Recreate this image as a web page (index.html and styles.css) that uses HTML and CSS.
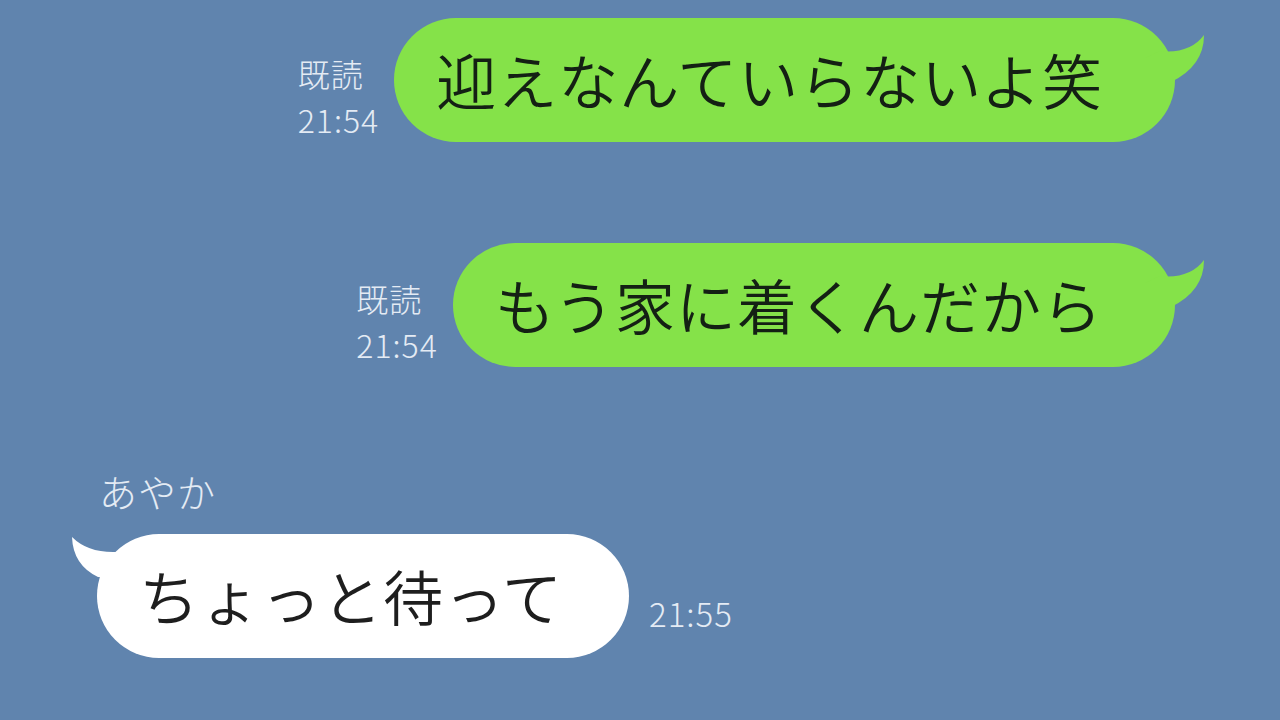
FILE: index.html
```html
<!DOCTYPE html>
<html lang="ja">
<head>
<meta charset="utf-8">
<title>Chat</title>
<link rel="stylesheet" href="styles.css">
</head>
<body>
<div class="chat">
  <div class="row-out row-first">
    <div class="meta"><span>既読</span><span>21:54</span></div>
    <div class="bubble bubble-out">迎えなんていらないよ笑
      <svg class="tail-out" width="75" height="80" viewBox="0 0 75 80"><path d="M10,40 L25,33 Q55,36 69,17 Q69,48 36,64 L10,64 Z" fill="#85e249"/></svg>
    </div>
  </div>
  <div class="row-out row-second">
    <div class="meta"><span>既読</span><span>21:54</span></div>
    <div class="bubble bubble-out">もう家に着くんだから
      <svg class="tail-out" width="75" height="80" viewBox="0 0 75 80"><path d="M10,40 L25,33 Q55,36 69,17 Q69,48 36,64 L10,64 Z" fill="#85e249"/></svg>
    </div>
  </div>
  <div class="incoming">
    <div class="name">あやか</div>
    <div class="row-in">
      <div class="bubble bubble-in">ちょっと待って
        <svg class="tail-in" width="60" height="70" viewBox="0 0 60 70"><path d="M7,8 Q22,23 48,23 L58,23 L58,50 L33,48 Q8,36 7,8 Z" fill="#ffffff"/></svg>
      </div>
      <div class="time-in">21:55</div>
    </div>
  </div>
</div>
</body>
</html>
```

FILE: styles.css
```css
html, body {
  margin: 0;
  padding: 0;
}

.chat {
  width: 1280px;
  height: 720px;
  background: #6084ae;
  font-family: "Noto Sans CJK JP", "Noto Sans", sans-serif;
  display: flex;
  flex-direction: column;
  overflow: hidden;
}

.row-out {
  display: flex;
  justify-content: flex-end;
  align-items: flex-end;
  gap: 15px;
  padding-right: 105px;
}

.row-first {
  margin-top: 18px;
}

.row-second {
  margin-top: 101px;
}

.meta {
  display: flex;
  flex-direction: column;
  align-items: flex-start;
  font-size: 32px;
  font-weight: 300;
  line-height: 46px;
  letter-spacing: 1px;
  color: #e4ebf4;
  margin-bottom: 0;
}

.bubble {
  position: relative;
  box-sizing: border-box;
  height: 124px;
  border-radius: 62px;
  display: flex;
  align-items: center;
  padding: 0 72px 4px 42px;
  font-size: 60px;
  font-weight: 350;
  letter-spacing: 1px;
  white-space: nowrap;
}

.bubble-out {
  background: #85e249;
  color: #142014;
}

.bubble-in {
  background: #ffffff;
  color: #1e1e1e;
  padding-right: 66px;
}

.tail-out {
  position: absolute;
  left: calc(100% - 40px);
  top: 0;
}

.tail-in {
  position: absolute;
  left: -32px;
  top: -5px;
}

.incoming {
  margin-top: 101px;
  padding-left: 97px;
  display: flex;
  flex-direction: column;
}

.name {
  font-size: 38px;
  font-weight: 300;
  line-height: 46px;
  letter-spacing: 1px;
  color: #e4ebf4;
  padding-left: 2px;
}

.row-in {
  display: flex;
  align-items: flex-end;
  gap: 20px;
  margin-top: 20px;
}

.time-in {
  font-size: 33px;
  font-weight: 300;
  line-height: 48px;
  letter-spacing: 1px;
  color: #e4ebf4;
  margin-bottom: 21px;
}
```
